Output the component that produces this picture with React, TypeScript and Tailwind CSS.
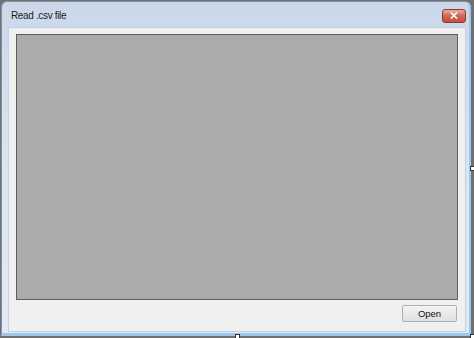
import React from "react";

export default function App() {
  return (
    <div className="relative w-[474px] h-[338px] bg-[#707070] overflow-hidden pl-[1px] pt-[1px] antialiased" style={{ fontFamily: '"Liberation Sans", Arial, sans-serif' }}>
      <div className="w-[470px] h-[335px] rounded-t-[6px] border border-[#8392a3] border-r-[2px] border-b-[3px] border-r-[#9cc8ec] border-b-[#9cc8ec] bg-gradient-to-b from-[#cbd8ea] via-[#dbe5f2] to-[#e2eaf5] flex flex-col">
        <div className="h-[25px] flex items-center justify-between pl-[9px] pr-[3px] shrink-0">
          <span className="text-[10px] tracking-[-0.35px] text-[#1e1e1e] leading-none mt-[3px]">Read .csv file</span>
          <div className="w-[24px] h-[14px] mt-[2px] rounded-[3px] border border-[#8c3a30] bg-gradient-to-b from-[#e8ada0] via-[#d06452] to-[#c44f3c] flex items-center justify-center">
            <svg width="8" height="7" viewBox="0 0 8 7">
              <path d="M1.5 1 L6.5 6 M6.5 1 L1.5 6" stroke="#fff" strokeWidth="1.6" strokeLinecap="square" />
            </svg>
          </div>
        </div>
        <div className="flex-1 flex flex-col pl-[6px] pr-[3px] pb-[1px]">
          <div className="flex-1 border border-[#c3d2e3] bg-[#f0f0f0] flex flex-col">
            <div className="mt-[6px] ml-[7px] mr-[7px] h-[266px] bg-[#ababab] border border-[#5e5e5e]" />
            <div className="flex justify-end mt-[5px] mr-[8px]">
              <button className="w-[55px] h-[17px] rounded-[2px] border border-[#b0b0b0] bg-gradient-to-b from-[#f4f4f4] to-[#e0e0e0] text-[9.5px] text-[#111] leading-none flex items-center justify-center">
                Open
              </button>
            </div>
          </div>
        </div>
      </div>
      <div className="absolute left-[235px] top-[334px] w-[5px] h-[5px] bg-white border border-[#333]" />
      <div className="absolute left-[470px] top-[166px] w-[5px] h-[5px] bg-white border border-[#333]" />
      <div className="absolute left-[470px] top-[334px] w-[5px] h-[5px] bg-white border border-[#333]" />
    </div>
  );
}
